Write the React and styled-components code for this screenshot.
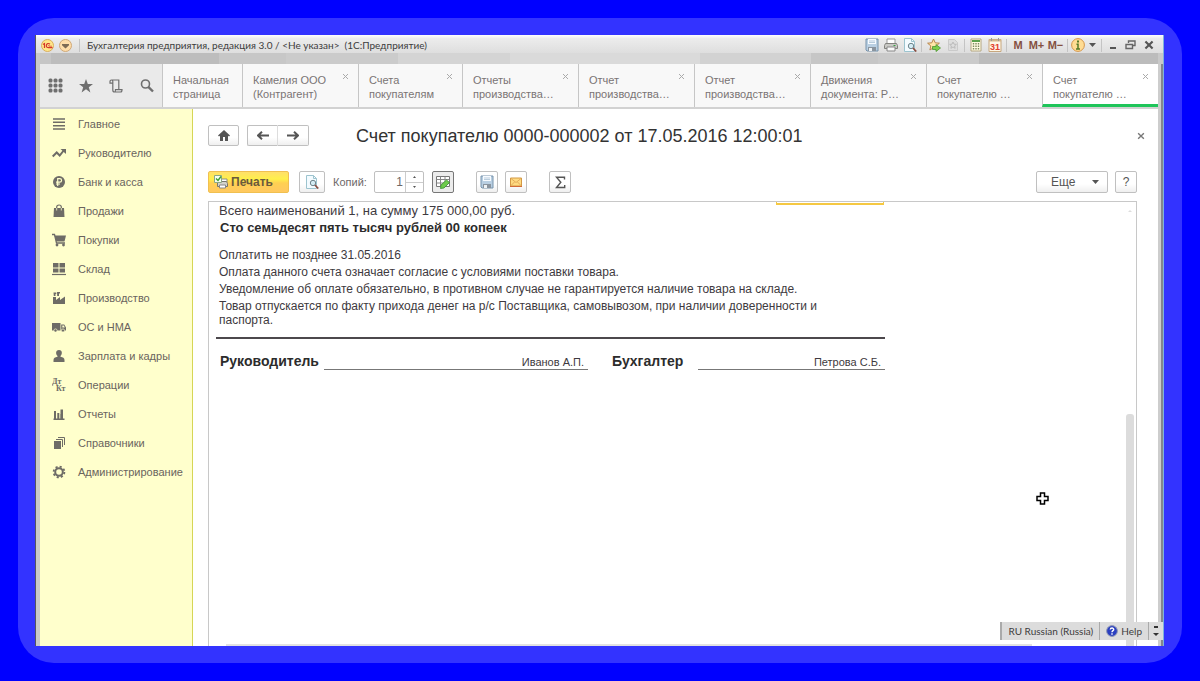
import React from 'react';
import styled, { createGlobalStyle, css } from 'styled-components';

const GlobalStyle = createGlobalStyle`
  * {
    box-sizing: border-box;
  }
  body {
    margin: 0;
    background: #0000ff;
    font-family: 'Liberation Sans', Arial, sans-serif;
    font-size: 11px;
    color: #6e6868;
  }
  button, input {
    font: inherit;
    color: inherit;
    margin: 0;
    padding: 0;
  }
  svg {
    display: block;
    flex: none;
  }
`;

const Desktop = styled.div`
  min-height: 100vh;
  padding: 18px;
  display: flex;
`;

const Halo = styled.div`
  flex: 1;
  display: flex;
  padding: 17px 18px 17px 17px;
  background: #3333ff;
  border-radius: 36px;
`;

const Window = styled.div`
  position: relative;
  flex: 1;
  min-width: 0;
  display: flex;
  flex-direction: column;
  border-left: 1px solid #55555f;
  border-right: 1px solid #7db4dc;
  background: #c9c9c9;
`;

const TitleBar = styled.header`
  display: flex;
  align-items: center;
  height: 18px;
  padding: 2px 5px 0 4px;
  background: linear-gradient(#ffffff, #ececec 20%, #dedede);
  font-family: Lato, 'Liberation Sans', sans-serif;
  font-size: 10px;
  color: #3c3c3c;
  white-space: nowrap;
`;

const WindowTitle = styled.div`
  flex: 1;
  margin-left: 5px;
`;

const TitleTools = styled.div`
  display: flex;
  align-items: center;
`;

const TitleButton = styled.button`
  display: flex;
  align-items: center;
  justify-content: center;
  width: ${(props) => props.$width || 19}px;
  height: 16px;
  border: 0;
  background: none;
  font-family: 'Liberation Sans', sans-serif;
  font-size: 11px;
  font-weight: bold;
  color: ${(props) => props.$color || '#555'};
`;

const TitleSeparator = styled.span`
  width: 1px;
  height: 13px;
  margin: 0 2px;
  background: #c4c4c4;
`;

const GlassStrip = styled.div`
  height: 11px;
  margin: 0 5px 0 4px;
  background: linear-gradient(
    90deg,
    #c6c6c6 1%,
    #bdbdbd 1% 16%,
    #c7c7c7 16% 22%,
    #cbcbcb 22% 32%,
    #d4d4d4 32% 42%,
    #dadada 42% 59%,
    #d2d2d2 59% 69%,
    #c6c6c6 69% 75%,
    #cacaca 75% 84%,
    #bcbcbc 84%
  );
`;

const Client = styled.div`
  flex: 1;
  display: flex;
  flex-direction: column;
  min-height: 0;
  margin-left: 4px;
  border-right: 3px solid #cdcdcd;
  background: #fff;
`;

const WindowBody = styled.div`
  flex: 1;
  display: flex;
  flex-direction: column;
  border-right: 2px solid #84878c;
`;

const TabBar = styled.nav`
  display: flex;
  height: 45px;
  border-bottom: 2px solid #d2d2d2;
  background: #f8f8f8;
`;

const TabTools = styled.div`
  display: flex;
  align-items: center;
  flex: none;
  width: 122px;
  background: #eaeaea;
`;

const TabTool = styled.button`
  display: flex;
  align-items: center;
  justify-content: center;
  width: 31px;
  height: 30px;
  border: 0;
  background: none;
  color: #6f6f6f;
`;

const Tab = styled.div`
  display: flex;
  justify-content: space-between;
  flex: 0 1 ${(props) => props.$width}px;
  min-width: 0;
  padding: 9px 9px 0 10px;
  border-left: 1px solid #c6c6c6;
  ${(props) =>
    props.$active &&
    css`
      flex-grow: 1;
      background: #fff;
      border-bottom: 3px solid #1fc55a;
    `}
`;

const TabLabel = styled.a`
  line-height: 14px;
  color: #7a7474;
  text-decoration: none;
  white-space: pre;
`;

const TabClose = styled.button`
  display: flex;
  width: 7px;
  height: 7px;
  border: 0;
  background: none;
  color: #aaa;
`;

const Body = styled.div`
  flex: 1;
  display: flex;
  min-height: 0;
`;

const Sidebar = styled.aside`
  flex: none;
  width: 153px;
  border-right: 1px solid #d6d655;
  background: #ffffcc;
`;

const SideLink = styled.a`
  display: flex;
  align-items: center;
  gap: 12px;
  height: 29px;
  padding-left: 12px;
  padding-top: 1px;
  color: #6a645e;
  text-decoration: none;
  white-space: nowrap;
`;

const Main = styled.main`
  flex: 1;
  min-width: 0;
  display: flex;
  flex-direction: column;
  padding: 16px 21px 0 15px;
`;

const PageHead = styled.div`
  display: flex;
  align-items: center;
  height: 21px;
`;

const PageTitle = styled.h1`
  flex: 1;
  margin: 0 0 0 47px;
  font-size: 18px;
  font-weight: normal;
  line-height: 22px;
  color: #333;
  white-space: nowrap;
`;

const Button = styled.button`
  display: flex;
  align-items: center;
  justify-content: center;
  width: ${(props) => props.$width || 22}px;
  height: ${(props) => props.$height || 22}px;
  margin-left: ${(props) => props.$gap || 0}px;
  border: 1px solid #c0c0c0;
  border-radius: 2px;
  background: linear-gradient(#fff 60%, #efefef);
  font-size: 12px;
  color: #555;
  ${(props) =>
    props.$pressed &&
    css`
      border-color: #777;
      background: #ececec;
    `}
`;

const ButtonPair = styled.div`
  display: flex;
  margin-left: 8px;
  button:first-child {
    border-right-color: #ddd;
    border-radius: 2px 0 0 2px;
  }
  button:last-child {
    border-left: 0;
    border-radius: 0 2px 2px 0;
  }
`;

const PrintButton = styled(Button)`
  justify-content: flex-start;
  gap: 3px;
  padding-left: 5px;
  border-color: #f0c050;
  background: linear-gradient(#ffdf6a, #fff04a 35%, #ffd052 55%, #ffc860);
  font-weight: bold;
  color: #6a5a3c;
`;

const ClosePage = styled.button`
  display: flex;
  align-items: center;
  justify-content: center;
  width: 15px;
  height: 15px;
  margin-right: -11px;
  border: 0;
  background: none;
  color: #777;
`;

const Toolbar = styled.div`
  display: flex;
  align-items: center;
  height: 22px;
  margin-top: 25px;
`;

const CopiesLabel = styled.label`
  width: 41px;
  margin-left: 8px;
`;

const Spinner = styled.div`
  display: flex;
  width: 50px;
  height: 22px;
  margin-right: 8px;
  border: 1px solid #c0c0c0;
  border-radius: 2px;
  input {
    width: 30px;
    padding-right: 2px;
    border: 0;
    background: none;
    font-size: 12px;
    text-align: right;
  }
`;

const Steps = styled.div`
  flex: 1;
  display: flex;
  flex-direction: column;
  border-left: 1px solid #ccc;
  button {
    flex: 1;
    display: flex;
    align-items: center;
    justify-content: center;
    border: 0;
    background: none;
  }
  button + button {
    border-top: 1px solid #ccc;
  }
`;

const Spacer = styled.div`
  flex: 1;
`;

const MoreButton = styled(Button)`
  justify-content: space-between;
  padding: 0 8px 0 14px;
`;

const Preview = styled.section`
  position: relative;
  flex: 1;
  display: flex;
  flex-direction: column;
  margin-top: 8px;
  border: 1px solid #c8c8c8;
  border-bottom: 0;
`;

const Sheet = styled.article`
  width: 669px;
  margin-left: 7px;
  font-size: 12px;
  color: #3e3a40;
`;

const Total = styled.p`
  margin: 0;
  padding-left: 3px;
  font-size: 13px;
  line-height: 17px;
`;

const TotalWords = styled(Total)`
  padding-left: 4px;
  font-weight: bold;
  color: #2c2c2c;
`;

const Terms = styled.div`
  padding: 12px 40px 7px 3px;
  p {
    margin: 0 0 3px;
    line-height: 14px;
  }
`;

const Signatures = styled.div`
  display: grid;
  grid-template-columns: 108px 264px 110px 187px;
  height: 33px;
  align-items: end;
  border-top: 2px solid #4c484c;
`;

const Role = styled.strong`
  padding-left: ${(props) => props.$indent}px;
  font-size: 14px;
  line-height: 18px;
  color: #2c2c2c;
`;

const Signer = styled.span`
  padding-right: 4px;
  border-bottom: 1px solid #777;
  font-size: 11px;
  line-height: 14px;
  text-align: right;
`;

// frame of the selected cell, its top part is scrolled away
const CellMark = styled.div`
  position: absolute;
  top: 0;
  left: 567px;
  width: 108px;
  height: 3px;
  border: 1px solid #f5c842;
  border-top: 0;
  border-bottom-width: 2px;
`;

const ScrollUp = styled.div`
  position: absolute;
  top: 8px;
  right: 4px;
  color: #ddd;
`;

const VerticalThumb = styled.div`
  position: absolute;
  top: 212px;
  right: 2px;
  bottom: 0;
  width: 8px;
  border-radius: 3px 3px 0 0;
  background: #dcdcdc;
`;

const HorizontalThumb = styled.div`
  position: absolute;
  left: 17px;
  right: 104px;
  bottom: 0;
  height: 2px;
  background: #e2e2e2;
`;

const Cursor = styled.div`
  position: absolute;
  right: 87px;
  top: 290px;
`;

const LanguageBar = styled.footer`
  position: absolute;
  right: 0;
  bottom: 6px;
  display: flex;
  height: 18px;
  border-left: 2px solid #aaa;
  background: #dcdcdc;
  font-family: Lato, 'Liberation Sans', sans-serif;
  font-size: 10px;
  color: #3c3c3c;
`;

const LanguageButton = styled.button`
  display: flex;
  align-items: center;
  gap: 3px;
  padding: 0 6px;
  border: 0;
  border-right: 1px solid #aaa;
  background: none;
  white-space: nowrap;
  &:last-child {
    padding: 0 4px;
    border-right: 0;
  }
`;

const Svg = ({ w = 14, h = 14, box, children }) => (
  <svg width={w} height={h} viewBox={box || `0 0 ${w} ${h}`} fill="none" aria-hidden="true">
    {children}
  </svg>
);

const CrossIcon = ({ size = 7, weight = 1 }) => (
  <Svg w={size} h={size} box="0 0 7 7">
    <path d="M1 1l5 5M6 1l-5 5" stroke="currentColor" strokeWidth={weight} />
  </Svg>
);

const CaretIcon = () => (
  <Svg w={7} h={4}>
    <path d="M0 0h7L3.5 4z" fill="currentColor" />
  </Svg>
);

const FloppyIcon = () => (
  <Svg>
    <path d="M1 1h12v12H2l-1-1z" fill="#b9cfe2" stroke="#7793ac" />
    <path d="M3 1h8v5H3z" fill="#f7fbff" />
    <path d="M4 3h6M4 4.5h6" stroke="#9fb9ce" strokeWidth=".7" />
    <path d="M3 9h8v4H3z" fill="#8a949e" />
    <path d="M4 10h3v3H4z" fill="#eef2f5" />
  </Svg>
);

const PrinterIcon = () => (
  <Svg>
    <path d="M3 1h8v5H3z" fill="#fff" stroke="#999" />
    <path d="M1.5 5.5h11l1 2v3h-13v-3z" fill="#c9c9c5" stroke="#82827e" />
    <path d="M3 9h8v4H3z" fill="#fafafa" stroke="#888" />
    <path d="M9.5 7.5h2" stroke="#39a545" />
  </Svg>
);

const PreviewIcon = () => (
  <Svg>
    <path d="M1.5.5h7l3 3v10h-10z" fill="#f3fbff" stroke="#9dc4cf" />
    <path d="M8.5.5v3h3" stroke="#9dc4cf" />
    <circle cx="8" cy="8" r="2.7" fill="#d4ebf3" stroke="#70858c" />
    <path d="M10 10l3.2 3.5" stroke="#8c4f43" strokeWidth="1.8" />
  </Svg>
);

const FavouriteIcon = () => (
  <Svg>
    <path d="M6.5 1l1.7 3.8 4.2.4-3.2 2.7.9 4.1-3.6-2.2L2.9 12l.9-4.1L.6 5.2l4.2-.4z" fill="#ffe6a8" stroke="#b8854c" />
    <path d="M5.5 8.5h3.5V6.5l4.5 3.5L9 13.5v-2H5.5z" fill="#7ccf4c" stroke="#4b9430" strokeWidth=".8" />
  </Svg>
);

const FadedStarIcon = () => (
  <Svg w={12} h={14}>
    <path d="M1.5 1.5h6l3 3v8h-9z" fill="#dedede" stroke="#cacaca" />
    <path d="M6 4l1 2.2 2.4.2-1.8 1.5.5 2.4L6 9l-2.1 1.3.5-2.4-1.8-1.5L5 6.2z" stroke="#bcbcbc" />
  </Svg>
);

const CalculatorIcon = () => (
  <Svg w={12} h={14}>
    <path d="M1 1h10v12H1z" fill="#fffbe1" stroke="#b4a682" />
    <path d="M2 3h8" stroke="#5da24c" strokeWidth="2" />
    <path d="M3.5 5v7M6 5v7M8.5 5v7" stroke="#7e8b60" strokeWidth="1.4" strokeDasharray="1.5 1" />
  </Svg>
);

const CalendarIcon = () => (
  <Svg>
    <path d="M1 1.5h12v12H1z" fill="#fff7e6" stroke="#c7a77e" />
    <path d="M1 2.5h12" stroke="#d4b78c" strokeWidth="2" />
    <path d="M3.5 0v3M10.5 0v3" stroke="#999" />
    <text x="7" y="12" fontSize="9" fontWeight="bold" fill="#e2402c" textAnchor="middle">31</text>
  </Svg>
);

const InfoIcon = () => (
  <Svg>
    <circle cx="7" cy="7" r="6.4" fill="#ffdc93" stroke="#d5964b" />
    <path d="M7 2.5v2" stroke="#557a28" strokeWidth="2" />
    <path d="M5.5 6.2H7V11M5 11h4" stroke="#557a28" strokeWidth="1.5" />
  </Svg>
);

const MinimizeIcon = () => (
  <Svg w={8} h={10}>
    <path d="M1 8h6" stroke="#555" strokeWidth="2" />
  </Svg>
);

const RestoreIcon = () => (
  <Svg w={11} h={10}>
    <path d="M3.5 3V1H10v4.500H8" stroke="#666" strokeWidth="1.4" />
    <path d="M1 4.500h6.500v4H1z" stroke="#666" strokeWidth="1.4" />
  </Svg>
);

const LogoIcon = () => (
  <Svg w={13} h={13}>
    <circle cx="6.5" cy="6.5" r="6" fill="#ffe789" stroke="#d9ae5c" />
    <path d="M2 5.5l1.500-1V9" stroke="#d5382b" strokeWidth="1.2" />
    <path d="M9 5.2C7.600 3.800 5.300 4.700 5.300 6.700 5.300 8.300 6.500 8.700 8 8.600h3.500" stroke="#d5382b" strokeWidth="1.2" />
    <path d="M8.600 6.200c-1.200-.5-1.600.9-.6 1h3" stroke="#d5382b" strokeWidth=".7" />
  </Svg>
);

const MenuBallIcon = () => (
  <Svg w={13} h={13}>
    <circle cx="6.5" cy="6.5" r="6" fill="#ffdda8" stroke="#cfa878" />
    <path d="M3 5h7v1.200L6.500 9.500 3 6.200z" fill="#7d6b54" />
  </Svg>
);

const HelpIcon = () => (
  <Svg w={12} h={12}>
    <circle cx="6" cy="6" r="5.4" fill="#2a3fc0" stroke="#8f97b5" />
    <path d="M4.300 4.500C4.400 2.500 7.800 2.500 7.700 4.600 7.600 5.600 6 5.800 6 7.300M6 8.300v1.400" stroke="#fff" strokeWidth="1.4" />
  </Svg>
);

const GridIcon = () => (
  <Svg w={15} h={15}>
    {[2.5, 7.5, 12.5].map((y) =>
      [2.5, 7.5, 12.5].map((x) => (
        <rect key={`${x}-${y}`} x={x - 2} y={y - 2} width="4" height="4" rx="1.5" fill="currentColor" />
      ))
    )}
  </Svg>
);

const StarIcon = () => (
  <Svg>
    <path d="M7 0l1.800 5H14L9.800 8.200l1.600 5.200L7 10.300l-4.400 3.100 1.600-5.200L0 5h5.200z" fill="currentColor" />
  </Svg>
);

const ScrollIcon = () => (
  <Svg>
    <path
      d="M3.800 4.200H1V2.600C1 1.600 1.600 1 2.500 1h7.300v9.200M3.800 4.200V11c0 1.300.5 2 1.700 2h6c1 0 1.500-.8 1.500-2.300H6.500C6.500 12.300 6.200 13 5.500 13M3.800 4.200V2.600C3.800 1.600 3.300 1 2.500 1"
      stroke="currentColor"
      strokeWidth="1.2"
    />
  </Svg>
);

const SearchIcon = () => (
  <Svg>
    <circle cx="5.5" cy="5" r="4" stroke="currentColor" strokeWidth="1.6" />
    <path d="M8.300 7.800l4.700 4.700" stroke="currentColor" strokeWidth="2.4" />
  </Svg>
);

const HomeIcon = () => (
  <Svg w={12} h={11}>
    <path d="M6 0l6 5.500-1 1-1-.8V11H7V7H5v4H2V5.700l-1 .8-1-1z" fill="currentColor" />
  </Svg>
);

const ArrowIcon = ({ flip }) => (
  <Svg w={12} h={9}>
    <path
      d={flip ? 'M0 4.500h11M7 .8l4 3.700-4 3.700' : 'M12 4.500H1M5 .8L1 4.500l4 3.700'}
      stroke="currentColor"
      strokeWidth="2"
    />
  </Svg>
);

const PrintCheckIcon = () => (
  <Svg>
    <path d="M5 4h8v3H5z" fill="#fff" stroke="#8e8e80" />
    <path d="M3.500 6.500h9l1 2v3h-10z" fill="#d2d2cb" stroke="#77776c" />
    <path d="M5.500 10h6v3h-6z" fill="#fff" stroke="#888" />
    <path d="M.5.5h7v7h-7z" fill="#f6fff0" stroke="#8aa886" />
    <path d="M2 3.500l2 2 3-4" stroke="#3c9d36" strokeWidth="1.4" />
  </Svg>
);

const TableEditIcon = () => (
  <Svg>
    <path d="M.5 1.500h13v10H.5z" fill="#fff" stroke="#777" />
    <path d="M.5 4.500h13M.5 8h13M4.500 1.500v10M9 1.500v10" stroke="#888" />
    <path d="M5 10l5.500-5 3 2.500L8 13l-3.500.5z" fill="#6ecb4c" stroke="#378b32" strokeWidth=".8" />
  </Svg>
);

const MailIcon = () => (
  <Svg w={12} h={10}>
    <path d="M.5 1h11v8H.5z" fill="#ffdb82" stroke="#d39a45" />
    <path d="M1 1.500l5 4 5-4M1 8.500L4.500 5M11 8.500L7.500 5" stroke="#dca050" strokeWidth=".8" />
    <path d="M0 9.500h12" stroke="#d36c38" />
  </Svg>
);

const SumIcon = () => (
  <Svg w={11} h={13}>
    <path d="M9.500 3.500V1.200h-8l4.300 5-4.300 5.300h8.200V9" stroke="currentColor" strokeWidth="1.4" />
  </Svg>
);

const StepIcon = ({ up }) => (
  <Svg w={3} h={2}>
    <path d={up ? 'M0 2h3L1.500 0z' : 'M0 0h3L1.500 2z'} fill="#555" />
  </Svg>
);

const CursorIcon = () => (
  <Svg w={13} h={13}>
    <path d="M4.500 1h4v3.500H12v4H8.500V12h-4V8.500H1v-4h3.500z" fill="#fff" stroke="#000" strokeWidth="1.5" />
  </Svg>
);

const sections = [
  {
    title: 'Главное',
    icon: <path d="M1 2h12M1 5.300h12M1 8.700h12M1 12h12" stroke="#6e6c66" strokeWidth="1.6" />,
  },
  {
    title: 'Руководителю',
    icon: (
      <>
        <path d="M.7 10.500l4-4 3 3 4-5" stroke="#6e6c66" strokeWidth="2" />
        <path d="M8.500 3H14v5z" fill="#6e6c66" />
      </>
    ),
  },
  {
    title: 'Банк и касса',
    icon: (
      <>
        <circle cx="7" cy="7" r="6" fill="#6e6c66" />
        <path d="M5.700 11V3.700h2c2.500 0 2.500 3.500 0 3.500H4M4 9h4" stroke="#ffffcc" strokeWidth="1.2" />
      </>
    ),
  },
  {
    title: 'Продажи',
    icon: (
      <>
        <path d="M2 4h10l.5 9h-11z" fill="#6e6c66" />
        <path d="M4.700 5V3c0-2.700 4.600-2.700 4.600 0v2" stroke="#6e6c66" strokeWidth="1.2" />
        <path d="M4.700 4v2.500M9.300 4v2.500" stroke="#ffffcc" strokeWidth=".8" />
      </>
    ),
  },
  {
    title: 'Покупки',
    icon: (
      <>
        <path d="M2.500 2.500H14l-1.500 6H4.300z" fill="#6e6c66" />
        <path d="M0 1.500h2.500l2 8.500H13" stroke="#6e6c66" strokeWidth="1.3" />
        <circle cx="5" cy="12" r="1.4" fill="#6e6c66" />
        <circle cx="11.5" cy="12" r="1.4" fill="#6e6c66" />
      </>
    ),
  },
  {
    title: 'Склад',
    icon: (
      <>
        <path d="M1 1h5.500v4.500H1zM7.500 1H13v4.500H7.500zM1 6.500h5.500v4H1zM7.500 6.500H13v4H7.500z" fill="#6e6c66" />
        <path d="M0 12.500h14" stroke="#6e6c66" strokeWidth="1.2" />
      </>
    ),
  },
  {
    title: 'Производство',
    icon: (
      <path
        d="M1 13V6h3v3l4-3v3l5-3.500V13zM1.500 1.500H4.300V3H3.500v2H1.800zM5 1h3v1.500H7V5H5.200z"
        fill="#6e6c66"
      />
    ),
  },
  {
    title: 'ОС и НМА',
    icon: (
      <>
        <path d="M0 3h8.500v7.500H0zM9.200 4.500h3l1.800 3v3H9.200z" fill="#6e6c66" />
        <path d="M10.300 5.500h1.500l1 2h-2.500z" fill="#ffffcc" />
        <circle cx="3.5" cy="10.5" r="1.6" fill="#6e6c66" stroke="#ffffcc" strokeWidth=".7" />
        <circle cx="11" cy="10.5" r="1.6" fill="#6e6c66" stroke="#ffffcc" strokeWidth=".7" />
      </>
    ),
  },
  {
    title: 'Зарплата и кадры',
    icon: (
      <path
        d="M7 1c3.800 0 3.300 4.500 1.500 6v.7C11 8.300 12.500 9 12.500 11v2h-11v-2c0-2 1.500-2.700 4-3.300V7C3.700 5.500 3.200 1 7 1z"
        fill="#6e6c66"
      />
    ),
  },
  {
    title: 'Операции',
    icon: (
      <g fill="#6e6c66" fontFamily="Liberation Serif" fontWeight="bold" fontSize="8">
        <text x="0" y="6">Дт</text>
        <text x="4" y="13">Кт</text>
      </g>
    ),
  },
  {
    title: 'Отчеты',
    icon: (
      <path d="M2 4h2v7.500h1.300V6h2v5.500h1V7h.200V2.500h2.500v9h1.500V13H1.500v-1.500H2z" fill="#6e6c66" />
    ),
  },
  {
    title: 'Справочники',
    icon: (
      <>
        <path d="M2 5h7v8H2z" fill="#6e6c66" />
        <path d="M4 3.500h6.500V11M6 1.500h6.500V9" stroke="#6e6c66" />
      </>
    ),
  },
  {
    title: 'Администрирование',
    icon: (
      <>
        <circle cx="7" cy="7" r="3.8" stroke="#6e6c66" strokeWidth="2" />
        <circle cx="7" cy="7" r="5.4" stroke="#6e6c66" strokeWidth="1.8" strokeDasharray="2.12 2.12" />
      </>
    ),
  },
];

const tabs = [
  { title: 'Начальная\nстраница', width: 80, fixed: true },
  { title: 'Камелия ООО\n(Контрагент)', width: 116 },
  { title: 'Счета\nпокупателям', width: 104 },
  { title: 'Отчеты\nпроизводства…', width: 116 },
  { title: 'Отчет\nпроизводства…', width: 116 },
  { title: 'Отчет\nпроизводства…', width: 116 },
  { title: 'Движения\nдокумента: Р…', width: 116 },
  { title: 'Счет\nпокупателю …', width: 116 },
  { title: 'Счет\nпокупателю …', width: 116, active: true },
];

function Header() {
  return (
    <TitleBar>
      <TitleButton $width={14} aria-label="1С"><LogoIcon /></TitleButton>
      <TitleButton $width={23} aria-label="Меню"><MenuBallIcon /></TitleButton>
      <TitleSeparator />
      <WindowTitle>Бухгалтерия предприятия, редакция 3.0 / &lt;Не указан&gt;&nbsp; (1С:Предприятие)</WindowTitle>
      <TitleTools>
        <TitleButton aria-label="Сохранить"><FloppyIcon /></TitleButton>
        <TitleButton aria-label="Печать"><PrinterIcon /></TitleButton>
        <TitleButton aria-label="Просмотр"><PreviewIcon /></TitleButton>
        <TitleSeparator />
        <TitleButton aria-label="В избранное"><FavouriteIcon /></TitleButton>
        <TitleButton aria-label="Избранное"><FadedStarIcon /></TitleButton>
        <TitleSeparator />
        <TitleButton $width={18} aria-label="Калькулятор"><CalculatorIcon /></TitleButton>
        <TitleButton aria-label="Календарь"><CalendarIcon /></TitleButton>
        <TitleSeparator />
        <TitleButton $width={18} $color="#84503f">M</TitleButton>
        <TitleButton $color="#84503f">M+</TitleButton>
        <TitleButton $color="#84503f">M−</TitleButton>
        <TitleSeparator />
        <TitleButton $width={16} aria-label="О программе"><InfoIcon /></TitleButton>
        <TitleButton $width={13} aria-label="Ещё"><CaretIcon /></TitleButton>
        <TitleSeparator />
        <TitleButton $width={17} aria-label="Свернуть"><MinimizeIcon /></TitleButton>
        <TitleButton aria-label="Восстановить"><RestoreIcon /></TitleButton>
        <TitleButton $width={18} aria-label="Закрыть"><CrossIcon size={10} weight={1.5} /></TitleButton>
      </TitleTools>
    </TitleBar>
  );
}

function Tabs() {
  return (
    <TabBar>
      <TabTools>
        <TabTool aria-label="Функции"><GridIcon /></TabTool>
        <TabTool aria-label="Избранное"><StarIcon /></TabTool>
        <TabTool aria-label="История"><ScrollIcon /></TabTool>
        <TabTool aria-label="Поиск"><SearchIcon /></TabTool>
      </TabTools>
      {tabs.map((tab, index) => (
        <Tab key={index} $width={tab.width} $active={tab.active}>
          <TabLabel href="#">{tab.title}</TabLabel>
          {!tab.fixed && (
            <TabClose aria-label="Закрыть"><CrossIcon /></TabClose>
          )}
        </Tab>
      ))}
    </TabBar>
  );
}

function Invoice() {
  return (
    <Preview>
      <Sheet>
        <Total>Всего наименований 1, на сумму 175 000,00 руб.</Total>
        <TotalWords>Сто семьдесят пять тысяч рублей 00 копеек</TotalWords>
        <Terms>
          <p>Оплатить не позднее 31.05.2016</p>
          <p>Оплата данного счета означает согласие с условиями поставки товара.</p>
          <p>Уведомление об оплате обязательно, в противном случае не гарантируется наличие товара на складе.</p>
          <p>Товар отпускается по факту прихода денег на р/с Поставщика, самовывозом, при наличии доверенности и паспорта.</p>
        </Terms>
        <Signatures>
          <Role $indent={4}>Руководитель</Role>
          <Signer>Иванов А.П.</Signer>
          <Role $indent={24}>Бухгалтер</Role>
          <Signer>Петрова С.Б.</Signer>
        </Signatures>
      </Sheet>
      <CellMark />
      <ScrollUp>
        <Svg w={4} h={2}><path d="M0 2h4L2 0z" fill="currentColor" /></Svg>
      </ScrollUp>
      <VerticalThumb />
      <HorizontalThumb />
      <Cursor><CursorIcon /></Cursor>
    </Preview>
  );
}

export default function App() {
  return (
    <Desktop>
      <GlobalStyle />
      <Halo>
        <Window>
          <Header />
          <GlassStrip />
          <WindowBody>
            <Client>
              <Tabs />
              <Body>
                <Sidebar>
                  {sections.map((section) => (
                    <SideLink href="#" key={section.title}>
                      <Svg>{section.icon}</Svg>
                      {section.title}
                    </SideLink>
                  ))}
                </Sidebar>
                <Main>
                  <PageHead>
                    <Button $width={31} $height={21} aria-label="Домой"><HomeIcon /></Button>
                    <ButtonPair>
                      <Button $width={31} $height={21} aria-label="Назад"><ArrowIcon /></Button>
                      <Button $width={31} $height={21} aria-label="Вперед"><ArrowIcon flip /></Button>
                    </ButtonPair>
                    <PageTitle>Счет покупателю 0000-000002 от 17.05.2016 12:00:01</PageTitle>
                    <ClosePage aria-label="Закрыть"><CrossIcon size={8} weight={1.2} /></ClosePage>
                  </PageHead>
                  <Toolbar>
                    <PrintButton $width={81}><PrintCheckIcon />Печать</PrintButton>
                    <Button $width={26} $gap={10} aria-label="Просмотр"><PreviewIcon /></Button>
                    <CopiesLabel htmlFor="copies">Копий:</CopiesLabel>
                    <Spinner>
                      <input id="copies" type="text" defaultValue="1" />
                      <Steps>
                        <button aria-label="Больше"><StepIcon up /></button>
                        <button aria-label="Меньше"><StepIcon /></button>
                      </Steps>
                    </Spinner>
                    <Button $pressed aria-label="Редактирование"><TableEditIcon /></Button>
                    <Button $gap={22} aria-label="Сохранить"><FloppyIcon /></Button>
                    <Button $gap={7} aria-label="Отправить"><MailIcon /></Button>
                    <Button $gap={22} aria-label="Сумма"><SumIcon /></Button>
                    <Spacer />
                    <MoreButton $width={72}>Еще<CaretIcon /></MoreButton>
                    <Button $gap={7}>?</Button>
                  </Toolbar>
                  <Invoice />
                </Main>
              </Body>
            </Client>
          </WindowBody>
          <LanguageBar>
            <LanguageButton>RU Russian (Russia)</LanguageButton>
            <LanguageButton><HelpIcon />Help</LanguageButton>
            <LanguageButton aria-label="Параметры">
              <Svg w={6} h={11}>
                <path d="M1 1h4" stroke="#333" strokeWidth="2" />
                <path d="M0 7h6L3 10z" fill="#333" />
              </Svg>
            </LanguageButton>
          </LanguageBar>
        </Window>
      </Halo>
    </Desktop>
  );
}
